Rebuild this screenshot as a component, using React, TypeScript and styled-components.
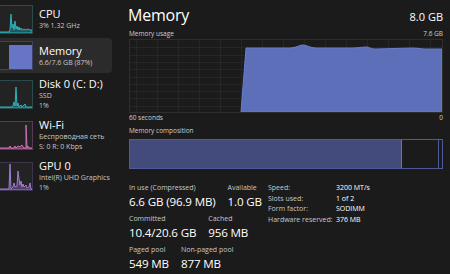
import React from 'react';
import styled, { createGlobalStyle } from 'styled-components';

const Global = createGlobalStyle`
  html, body { margin: 0; padding: 0; background: #1b1b1b; }
  body { font-family: "Open Sans", "Noto Sans", sans-serif; color: #fff; }
  * { box-sizing: border-box; }
`;

const Page = styled.div`
  width: 450px;
  height: 274px;
  display: flex;
  background: #1b1b1b;
  overflow: hidden;
`;

const Sidebar = styled.nav`
  width: 112px;
  flex: none;
  display: flex;
  flex-direction: column;
  padding-top: 1px;
  gap: 1px;
`;

const Row = styled.div<{ $active?: boolean; $h: number }>`
  height: ${p => p.$h}px;
  display: flex;
  align-items: center;
  gap: 6px;
  background: ${p => (p.$active ? '#2b2b2b' : 'transparent')};
  border-radius: 0 4px 4px 0;
`;

const Thumb = styled.div<{ $c: string }>`
  width: 33px;
  height: 29px;
  flex: none;
  background: #232323;
  border: 1px solid ${p => p.$c};
  border-left: none;
  svg { display: block; width: 100%; height: 100%; }
`;

const RowText = styled.div`
  display: flex;
  flex-direction: column;
  white-space: nowrap;
`;

const RowTitle = styled.div`
  font-size: 11px;
  line-height: 14px;
  color: #fff;
`;

const RowSub = styled.div`
  font-size: 7px;
  line-height: 10px;
  color: #c8c8c8;
`;

const Main = styled.main`
  flex: 1;
  padding: 0 7px 0 17px;
  display: flex;
  flex-direction: column;
`;

const Header = styled.div`
  display: flex;
  justify-content: space-between;
  align-items: baseline;
  padding-top: 4px;
  height: 29px;
`;

const Title = styled.h1`
  margin: 0;
  font-size: 16px;
  font-weight: 400;
  letter-spacing: -0.2px;
  margin-left: -1px;
`;

const Total = styled.div`
  font-size: 11px;
`;

const Caption = styled.div<{ $mt?: number }>`
  display: flex;
  justify-content: space-between;
  margin-top: ${p => p.$mt ?? 0}px;
  font-size: 6.5px;
  line-height: 10px;
  color: #cfcfcf;
`;

const ChartBox = styled.div`
  width: 314px;
  height: 74px;
  border: 1px solid #2e2e2e;
  svg { display: block; }
`;

const CompBar = styled.div`
  display: flex;
  width: 314px;
  height: 30px;
  margin-top: 3px;
  border: 1px solid #4f5b98;
`;

const Seg = styled.div<{ $w: number; $bg: string; $bd: string }>`
  flex: 0 0 ${p => p.$w}px;
  background: ${p => p.$bg};
  border-right: 1px solid ${p => p.$bd};
`;

const Stats = styled.div`
  display: flex;
  align-items: flex-start;
  margin-top: 14px;
`;

const StatCol = styled.div`
  width: 139px;
  flex: none;
  display: flex;
  flex-direction: column;
  gap: 4px;
`;

const StatRow = styled.div`
  display: flex;
  gap: 12px;
`;

const Stat = styled.div`
  display: flex;
  flex-direction: column;
  white-space: nowrap;
`;

const StatLabel = styled.div`
  font-size: 7px;
  line-height: 10px;
  color: #c8c8c8;
`;

const StatValue = styled.div`
  font-size: 11.6px;
  letter-spacing: -0.15px;
  line-height: 17px;
  color: #fff;
`;

const Specs = styled.div`
  display: grid;
  grid-template-columns: 68px auto;
  align-content: start;
  font-size: 7px;
  line-height: 10.7px;
  white-space: nowrap;
`;

const SpecKey = styled.div`
  color: #c8c8c8;
`;

const SpecVal = styled.div`
  color: #fff;
`;

const Spark = ({ d, c }: { d: string; c: string }) => (
  <svg viewBox="0 0 32 27" preserveAspectRatio="none">
    <path d={d} fill={c} stroke={c} strokeWidth={1} fillOpacity={0.35} />
  </svg>
);

const teal = '#2bb3bf';
const pink = '#d06fb6';
const purple = '#a27ad6';

const sideItems = [
  {
    title: 'CPU', subs: ['3%  1.32 GHz'], h: 36, color: '#2a4a4e',
    graph: <Spark c={teal} d="M0 26 L9 26 L10 24 L11 8 L12 22 L13 18 L14 24 L15 15 L16 23 L17 20 L18 24 L19 21 L20 24 L21 22 L22 24 L24 23 L26 24 L28 23 L30 24 L32 24 L32 27 L0 27 Z" />,
  },
  {
    title: 'Memory', subs: ['6.6/7.6 GB (87%)'], h: 35, active: true, color: '#3c4266',
    graph: (
      <svg viewBox="0 0 32 27" preserveAspectRatio="none">
        <path d="M9 27 L9 3 L32 3 L32 27 Z" fill="#6675c6" />
      </svg>
    ),
  },
  {
    title: 'Disk 0 (C: D:)', subs: ['SSD', '1%'], h: 40, color: '#2a4a4e',
    graph: <Spark c={teal} d="M0 26 L12 26 L13 25 L14 21 L15 25 L16 6 L17 25 L18 22 L19 26 L21 24 L22 26 L25 23 L26 26 L32 26 L32 27 L0 27 Z" />,
  },
  {
    title: 'Wi-Fi', subs: ['Беспроводная сеть', 'S: 0  R: 0 Kbps'], h: 40, color: '#5a3a52',
    graph: <Spark c={pink} d="M0 26 L9 26 L10 24 L11 26 L14 26 L15 24 L16 26 L18 24 L20 25 L22 23 L23 25 L24 26 L26 26 L26 3 L27 26 L28 24 L29 26 L32 26 L32 27 L0 27 Z" />,
  },
  {
    title: 'GPU 0', subs: ['Intel(R) UHD Graphics', '1%'], h: 40, color: '#3e3350',
    graph: <Spark c={purple} d="M0 26 L9 26 L10 1 L11 26 L13 24 L14 20 L15 24 L17 23 L18 8 L19 16 L20 22 L21 18 L22 24 L23 21 L24 24 L26 22 L27 25 L29 24 L30 20 L31 26 L32 26 L32 27 L0 27 Z" />,
  },
];

const gridV = Array.from({ length: 15 }, (_, i) => 6 + i * 21);
const gridH = Array.from({ length: 9 }, (_, i) => (i + 1) * 7.3);

const UsageChart = () => (
  <svg width={312} height={72} viewBox="0 0 312 72">
    {gridV.map(x => (
      <line key={'v' + x} x1={x + 0.5} y1={0} x2={x + 0.5} y2={72} stroke="#262626" strokeWidth={1} />
    ))}
    {gridH.map(y => (
      <line key={'h' + y} x1={0} y1={Math.round(y) + 0.5} x2={312} y2={Math.round(y) + 0.5} stroke="#262626" strokeWidth={1} />
    ))}
    <path
      d="M111 72 L116 8 L160 8 C166 8 169 5 173 5 C177 5 180 8 186 8 L222 8 C228 8 232 7 236 7 C240 7 240 9 246 9 L282 8 C288 8 290 9 296 9 L312 9 L312 72 Z"
      fill="#5d6fb9"
      stroke="#6b7dcc"
      strokeWidth={1}
    />
  </svg>
);

export default function App() {
  return (
    <Page>
      <Global />
      <Sidebar>
        {sideItems.map(it => (
          <Row key={it.title} $h={it.h} $active={it.active}>
            <Thumb $c={it.color}>{it.graph}</Thumb>
            <RowText>
              <RowTitle>{it.title}</RowTitle>
              {it.subs.map(s => (
                <RowSub key={s}>{s}</RowSub>
              ))}
            </RowText>
          </Row>
        ))}
      </Sidebar>
      <Main>
        <Header>
          <Title>Memory</Title>
          <Total>8.0 GB</Total>
        </Header>
        <Caption>
          <span>Memory usage</span>
          <span>7.6 GB</span>
        </Caption>
        <ChartBox>
          <UsageChart />
        </ChartBox>
        <Caption>
          <span>60 seconds</span>
          <span>0</span>
        </Caption>
        <Caption $mt={3}>
          <span>Memory composition</span>
        </Caption>
        <CompBar>
          <Seg $w={272} $bg="#434b7c" $bd="#6272c4" />
          <Seg $w={37} $bg="#1b1b1b" $bd="#4f5b98" />
          <Seg $w={3} $bg="#1b1b1b" $bd="transparent" />
        </CompBar>
        <Stats>
          <StatCol>
            <StatRow>
              <Stat>
                <StatLabel>In use (Compressed)</StatLabel>
                <StatValue>6.6 GB (96.9 MB)</StatValue>
              </Stat>
              <Stat>
                <StatLabel>Available</StatLabel>
                <StatValue>1.0 GB</StatValue>
              </Stat>
            </StatRow>
            <StatRow>
              <Stat>
                <StatLabel>Committed</StatLabel>
                <StatValue>10.4/20.6 GB</StatValue>
              </Stat>
              <Stat>
                <StatLabel>Cached</StatLabel>
                <StatValue>956 MB</StatValue>
              </Stat>
            </StatRow>
            <StatRow>
              <Stat>
                <StatLabel>Paged pool</StatLabel>
                <StatValue>549 MB</StatValue>
              </Stat>
              <Stat>
                <StatLabel>Non-paged pool</StatLabel>
                <StatValue>877 MB</StatValue>
              </Stat>
            </StatRow>
          </StatCol>
          <Specs>
            <SpecKey>Speed:</SpecKey>
            <SpecVal>3200 MT/s</SpecVal>
            <SpecKey>Slots used:</SpecKey>
            <SpecVal>1 of 2</SpecVal>
            <SpecKey>Form factor:</SpecKey>
            <SpecVal>SODIMM</SpecVal>
            <SpecKey>Hardware reserved:</SpecKey>
            <SpecVal>376 MB</SpecVal>
          </Specs>
        </Stats>
      </Main>
    </Page>
  );
}
